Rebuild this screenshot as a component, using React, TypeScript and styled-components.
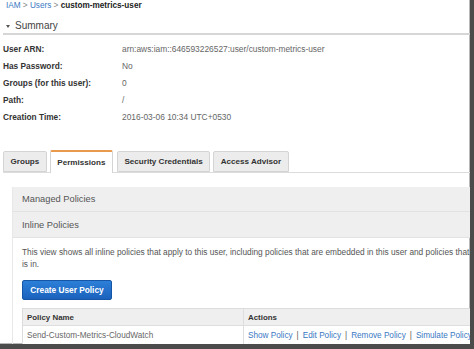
import React from "react";
import styled, {createGlobalStyle} from "styled-components";

const GlobalStyle = createGlobalStyle`
    html, body {
        margin: 0;
        padding: 0;
        background: #fff;
    }
    body {
        font-family: "Liberation Sans", Arial, sans-serif;
        color: #444;
    }
`;

/* The screenshot is a cropped window with a dark drop edge on the right and bottom */
const Frame = styled.div`
    box-sizing: border-box;
    width: 474px;
    height: 349px;
    overflow: hidden;
    background: #fff;
    border-right: 4px solid #4b4b4b;
    border-bottom: 5px solid #4b4b4b;
    box-shadow: inset -1px -1px 0 #b8b8b8;
`;

const Page = styled.div`
    width: 640px;
    padding-left: 3px;
`;

const Breadcrumb = styled.div`
    height: 12px;
    line-height: 12px;
    padding-left: 3px;
    font-size: 8.2px;
    color: #888;

    a {
        color: #3a78c3;
        text-decoration: none;
    }

    strong {
        color: #222;
    }
`;

const SummaryHeader = styled.div`
    margin-top: 7px;
    height: 14px;
    line-height: 14px;
    font-size: 10px;
    color: #444;
    border-bottom: 2px solid #d6d6d6;
    padding-left: 3px;
    display: flex;
    align-items: center;
    gap: 5px;
`;

const Caret = styled.span`
    width: 0;
    height: 0;
    border-left: 2.5px solid transparent;
    border-right: 2.5px solid transparent;
    border-top: 3px solid #555;
`;

const Details = styled.div`
    margin-top: 5px;
    display: grid;
    grid-template-columns: 119px auto;
    grid-auto-rows: 17px;
    align-items: center;
    font-size: 8.3px;
`;

const Label = styled.div`
    font-weight: bold;
    color: #333;
`;

const Value = styled.div`
    color: #666;
    font-size: 8.4px;
`;

const TabBar = styled.div`
    margin-top: 25px;
    height: 22px;
    display: flex;
    align-items: flex-end;
    border-bottom: 1px solid #dcdcdc;
`;

const Tab = styled.div<{ $active?: boolean; $gap: number }>`
    box-sizing: border-box;
    height: ${p => (p.$active ? "23px" : "21px")};
    margin-right: ${p => p.$gap}px;
    margin-bottom: ${p => (p.$active ? "-1px" : "0")};
    padding: 0 6.5px;
    display: flex;
    align-items: center;
    font-size: 8.1px;
    font-weight: bold;
    color: #333;
    background: ${p => (p.$active ? "#fff" : "#ececec")};
    border: 1px solid #d4d4d4;
    border-bottom: ${p => (p.$active ? "none" : "1px solid #d4d4d4")};
    border-top: ${p => (p.$active ? "2px solid #e99a4c" : "1px solid #d4d4d4")};
    border-radius: 2px 2px 0 0;
`;

const TabBody = styled.div`
    padding: 14px 0 0 9px;
`;

const PolicyBox = styled.div`
    border-left: 1px solid #e8e8e8;
`;

const SectionBar = styled.div<{ $h: number }>`
    height: ${p => p.$h}px;
    display: flex;
    align-items: center;
    padding-left: 9px;
    background: #efefef;
    border-bottom: 1px solid #e2e2e2;
    font-size: 9.3px;
    color: #555;
`;

const Description = styled.p`
    margin: 8px 0 0 9px;
    font-size: 8.3px;
    line-height: 12px;
    color: #555;
    white-space: nowrap;
`;

const CreateButton = styled.button`
    margin: 10px 0 0 9px;
    height: 20px;
    width: 90px;
    padding: 0;
    border: 1px solid #1656a6;
    border-radius: 2px;
    background: linear-gradient(#2c7fd8, #1b62bd);
    color: #fff;
    font-family: "Liberation Sans", Arial, sans-serif;
    font-size: 8.3px;
    font-weight: bold;
`;

const Table = styled.div`
    margin: 8px 0 0 9px;
    border: 1px solid #dcdcdc;
    border-bottom: none;
`;

const TableRow = styled.div<{ $header?: boolean }>`
    display: grid;
    grid-template-columns: 220px auto;
    height: ${p => (p.$header ? "16px" : "19px")};
    background: ${p => (p.$header ? "#efefef" : "#fff")};
    border-bottom: 1px solid #dedede;
    font-size: ${p => (p.$header ? "7.9px" : "8.2px")};
    font-weight: ${p => (p.$header ? "bold" : "normal")};
    color: ${p => (p.$header ? "#333" : "#666")};
`;

const Cell = styled.div`
    display: flex;
    align-items: center;
    padding-left: 4px;

    & + & {
        border-left: 1px solid #dedede;
    }
`;

const Link = styled.a`
    color: #3a78c3;
    text-decoration: none;
`;

const Pipe = styled.span`
    color: #555;
    margin: 0 4px;
`;

const details: [string, string][] = [
    ["User ARN:", "arn:aws:iam::646593226527:user/custom-metrics-user"],
    ["Has Password:", "No"],
    ["Groups (for this user):", "0"],
    ["Path:", "/"],
    ["Creation Time:", "2016-03-06 10:34 UTC+0530"],
];

const tabs = [
    {name: "Groups", gap: 3},
    {name: "Permissions", gap: 4, active: true},
    {name: "Security Credentials", gap: 3},
    {name: "Access Advisor", gap: 0},
];

const actions = ["Show Policy", "Edit Policy", "Remove Policy", "Simulate Policy"];

export default function App() {
    return (
        <Frame>
            <GlobalStyle/>
            <Page>
                <Breadcrumb>
                    <a href="#">IAM</a> &gt; <a href="#">Users</a> &gt; <strong>custom-metrics-user</strong>
                </Breadcrumb>
                <SummaryHeader>
                    <Caret/>
                    Summary
                </SummaryHeader>
                <Details>
                    {details.map(([label, value]) => (
                        <React.Fragment key={label}>
                            <Label>{label}</Label>
                            <Value>{value}</Value>
                        </React.Fragment>
                    ))}
                </Details>
                <TabBar>
                    {tabs.map(t => (
                        <Tab key={t.name} $active={t.active} $gap={t.gap}>{t.name}</Tab>
                    ))}
                </TabBar>
                <TabBody>
                    <PolicyBox>
                        <SectionBar $h={24}>Managed Policies</SectionBar>
                        <SectionBar $h={25}>Inline Policies</SectionBar>
                        <Description>
                            This view shows all inline policies that apply to this user, including policies that are
                            embedded in this user and policies that are embedded in groups that the user
                            <br/>
                            is in.
                        </Description>
                        <CreateButton>Create User Policy</CreateButton>
                        <Table>
                            <TableRow $header>
                                <Cell>Policy Name</Cell>
                                <Cell>Actions</Cell>
                            </TableRow>
                            <TableRow>
                                <Cell>Send-Custom-Metrics-CloudWatch</Cell>
                                <Cell>
                                    {actions.map((a, i) => (
                                        <React.Fragment key={a}>
                                            {i > 0 && <Pipe>|</Pipe>}
                                            <Link href="#">{a}</Link>
                                        </React.Fragment>
                                    ))}
                                </Cell>
                            </TableRow>
                        </Table>
                    </PolicyBox>
                </TabBody>
            </Page>
        </Frame>
    );
}
